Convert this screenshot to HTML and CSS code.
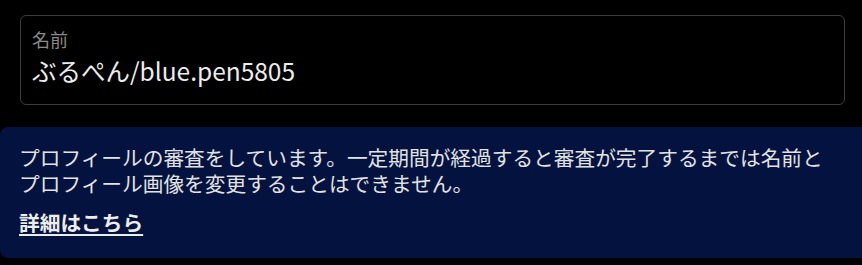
FILE: index.html
```html
<!DOCTYPE html>
<html>
<head>
	<title>プロフィール</title>
	<meta charset="UTF-8">
	<link rel="stylesheet" href="styles.css">
</head>
<body>
	<div class="page">
		<div class="field">
			<div class="field-label">名前</div>
			<div class="field-value">ぶるぺん/blue.pen5805</div>
		</div>
		<div class="notice">
			<p class="notice-text">プロフィールの審査をしています。一定期間が経過すると審査が完了するまでは名前とプロフィール画像を変更することはできません。</p>
			<a class="notice-link" href="#">詳細はこちら</a>
		</div>
	</div>
</body>
</html>
```

FILE: styles.css
```css
*{
	margin: 0;
	padding: 0;
	box-sizing: border-box;
}
html,body{
	background: #000;
	overflow: hidden;
}
body{
	font-family: "Noto Sans CJK JP", "Noto Sans", sans-serif;
	color: #e6e6e6;
}
.page{
	padding-top: 15px;
}
.field{
	margin: 0 17px 0 20px;
	height: 90px;
	border: 1px solid #3c3c3c;
	border-radius: 6px;
	padding: 11px 12px 0 11px;
}
.field-label{
	font-size: 18px;
	line-height: 25px;
	color: #8a8a8a;
}
.field-value{
	margin-top: 3px;
	font-size: 24.5px;
	line-height: 32px;
	color: #ececec;
}
.notice{
	margin-top: 22px;
	margin-right: -10px;
	height: 131px;
	background: #03123f;
	border-radius: 8px;
	padding: 17px 40px 0 19px;
}
.notice-text{
	font-size: 20.7px;
	line-height: 26px;
	color: #e2e2e2;
}
.notice-link{
	display: inline-block;
	margin-top: 13px;
	font-size: 20.7px;
	line-height: 26px;
	font-weight: bold;
	color: #ececec;
	text-decoration: underline;
	text-underline-offset: 3px;
}
```
